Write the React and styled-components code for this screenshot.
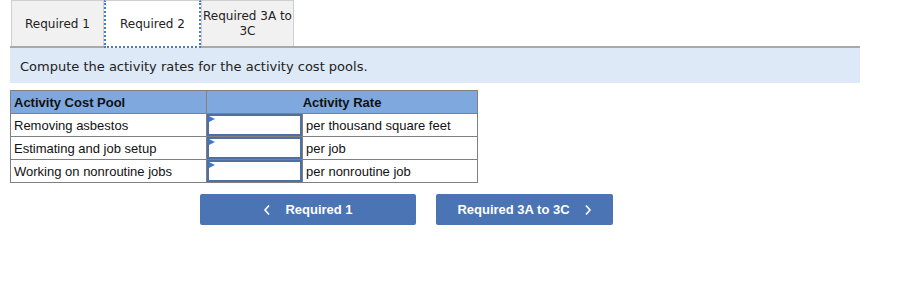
import React from "react";
import styled, { createGlobalStyle } from "styled-components";

const Global = createGlobalStyle`
body {
  margin: 0;
  background: #fff;
  font-family: "Liberation Sans", Arial, sans-serif;
}`

const Page = styled.div`
width: 850px;
padding: 0 0 0 10px;`

const TabBar = styled.div`
display: flex;
height: 46px;
border-bottom: 2px solid #a9a9a9;
padding-left: 1px;`

const Tab = styled.div`
box-sizing: border-box;
width: ${props => props.w || "93px"};
height: ${props => props.active ? "48px" : "46px"};
display: flex;
align-items: center;
justify-content: center;
text-align: center;
padding-top: ${props => props.pad || "2px"};
font-family: Verdana, "DejaVu Sans", sans-serif;
font-size: 12px;
line-height: 15px;
color: #222;
background-color: ${props => props.active ? "#fff" : "#f1f1f1"};
border: ${props => props.active ? "2px dotted #4a7cc4" : "1px solid #cfcfcf"};
border-top: 1px solid #cfcfcf;
border-bottom: ${props => props.active ? "2px dotted #4a7cc4" : "none"};
position: relative;
z-index: ${props => props.active ? 1 : 0};`

const Info = styled.div`
height: 35px;
background-color: #dde9f7;
display: flex;
align-items: center;
padding-left: 10px;
padding-top: 1px;
box-sizing: border-box;
font-family: Verdana, "DejaVu Sans", sans-serif;
font-size: 13px;
color: #222;`

const Table = styled.table`
margin-top: 7px;
border-collapse: collapse;
width: 468px;
font-size: 13px;
color: #111;
border: 1px solid #808080;`

const Th = styled.th`
background-color: #7ea8de;
height: 22px;
padding: 0 3px;
text-align: ${props => props.center ? "center" : "left"};
border: 1px solid #808080;
font-weight: bold;
color: #111;`

const Td = styled.td`
height: 22px;
padding: 0 3px;
border: 1px solid #808080;
width: ${props => props.w || "auto"};`

const InputCell = styled.td`
width: 95px;
padding: 0;
border: 1px solid #808080;
position: relative;`

const Field = styled.input`
box-sizing: border-box;
display: block;
width: 95px;
height: 22px;
margin: 0;
border: 2px solid #4d6fa3;
background: #fff;
outline: none;`

const Marker = styled.span`
position: absolute;
top: 2px;
left: 2px;
width: 0;
height: 0;
border-top: 3px solid transparent;
border-bottom: 3px solid transparent;
border-left: 6px solid #3e7ad0;`

const Nav = styled.div`
display: flex;
gap: 20px;
margin-top: 11px;
padding-left: 190px;`

const NavButton = styled.button`
box-sizing: border-box;
width: ${props => props.w};
height: 31px;
border: none;
border-radius: 2px;
background-color: #4a74b4;
color: #fff;
font-family: "Liberation Sans", Arial, sans-serif;
font-weight: bold;
font-size: 13px;
display: flex;
align-items: center;
justify-content: center;
gap: 14px;
padding: 0;`

const Chevron = styled.svg`
width: 8px;
height: 12px;`

function Arrow({ dir }) {
  return (
    <Chevron viewBox="0 0 8 12">
      <path
        d={dir === "left" ? "M6 1.5 L2 6 L6 10.5" : "M2 1.5 L6 6 L2 10.5"}
        fill="none"
        stroke="#fff"
        strokeWidth="1.6"
      />
    </Chevron>
  );
}

const rows = [
  ["Removing asbestos", "per thousand square feet"],
  ["Estimating and job setup", "per job"],
  ["Working on nonroutine jobs", "per nonroutine job"],
];

export default function App() {
  return (
    <Page>
      <Global />
      <TabBar>
        <Tab>Required 1</Tab>
        <Tab active w="97px">Required 2</Tab>
        <Tab pad="0px">Required 3A to<br />3C</Tab>
      </TabBar>
      <Info>Compute the activity rates for the activity cost pools.</Info>
      <Table>
        <thead>
          <tr>
            <Th style={{ width: "189px" }}>Activity Cost Pool</Th>
            <Th center colSpan={2}>Activity Rate</Th>
          </tr>
        </thead>
        <tbody>
          {rows.map(r => (
            <tr key={r[0]}>
              <Td w="189px">{r[0]}</Td>
              <InputCell>
                <Field type="text" />
                <Marker />
              </InputCell>
              <Td>{r[1]}</Td>
            </tr>
          ))}
        </tbody>
      </Table>
      <Nav>
        <NavButton w="216px"><Arrow dir="left" />Required 1</NavButton>
        <NavButton w="177px">Required 3A to 3C<Arrow dir="right" /></NavButton>
      </Nav>
    </Page>
  );
}
